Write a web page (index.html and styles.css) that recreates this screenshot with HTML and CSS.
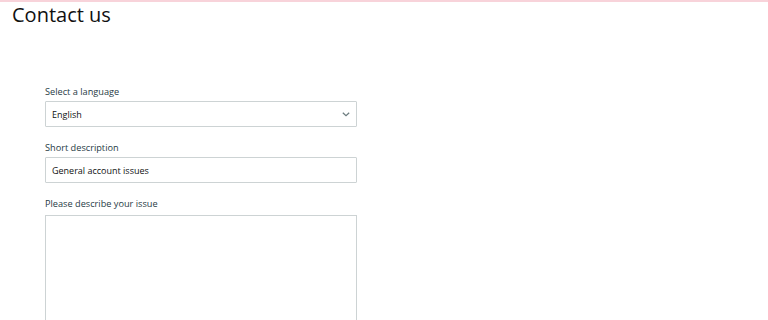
FILE: index.html
```html
<!DOCTYPE html>
<html lang="en">
<head>
<meta charset="utf-8">
<link rel="stylesheet" href="styles.css">
</head>
<body>
<div class="topline"></div>
<h1 class="title">Contact us</h1>
<form class="form">
  <div class="field">
    <label class="label">Select a language</label>
    <div class="select">
      <span class="value">English</span>
      <svg class="chev" width="8" height="5" viewBox="0 0 8 5"><path d="M0.8 0.8 L4 3.8 L7.2 0.8" fill="none" stroke="#6b7b7e" stroke-width="1.2"/></svg>
    </div>
  </div>
  <div class="field">
    <label class="label">Short description</label>
    <div class="input"><span class="value">General account issues</span></div>
  </div>
  <div class="field field-last">
    <label class="label">Please describe your issue</label>
    <div class="textarea"></div>
  </div>
</form>
</body>
</html>
```
FILE: styles.css
```css
html, body { margin: 0; padding: 0; background: #fff; overflow: hidden; }
body { font-family: "Open Sans", "Noto Sans", sans-serif; color: #111; height: 320px; }
.topline { height: 2px; background: #f8d3da; }
.title { margin: 0; padding: 0 0 0 12px; font-size: 20px; font-weight: 400; line-height: 26px; color: #111; }
.form { padding: 57px 0 0 45px; width: 312px; display: flex; flex-direction: column; gap: 14px; }
.field { display: flex; flex-direction: column; gap: 2px; }
.field-last { gap: 4px; }
.label { font-size: 9.2px; line-height: 14px; color: #1f3b45; }
.select, .input { box-sizing: border-box; height: 26px; border: 1px solid #cdd3d4; border-radius: 1px; display: flex; align-items: center; padding: 0 6px 0 6px; justify-content: space-between; }
.value { font-size: 9px; color: #0f1111; }
.chev { display: block; }
.textarea { box-sizing: border-box; height: 120px; border: 1px solid #cdd3d4; }
```
